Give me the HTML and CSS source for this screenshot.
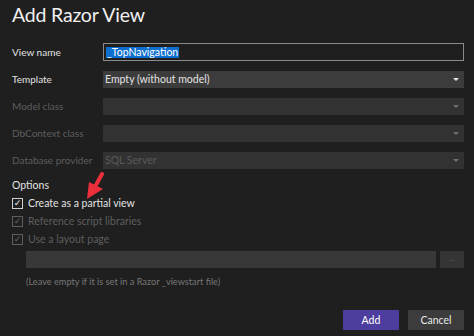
FILE: index.html
```html
<!DOCTYPE html>
<html lang="en">
<head>
  <meta charset="UTF-8">
  <title>Add Razor View</title>
  <link rel="stylesheet" href="styles.css">
</head>
<body>
  <div class="dialog">
    <h1 class="title">Add Razor View</h1>

    <div class="form">
      <label class="label">View name</label>
      <div class="textbox"><span class="selected">_TopNavigation</span></div>

      <label class="label">Template</label>
      <div class="combo">Empty (without model)<span class="caret"></span></div>

      <label class="label off">Model class</label>
      <div class="combo off"><span class="caret"></span></div>

      <label class="label off">DbContext class</label>
      <div class="combo off"><span class="caret"></span></div>

      <label class="label off">Database provider</label>
      <div class="combo off">SQL Server<span class="caret"></span></div>
    </div>

    <div class="options-title">Options</div>
    <div class="checks">
      <div class="check"><span class="box">✓</span>Create as a partial view</div>
      <div class="check off"><span class="box">✓</span>Reference script libraries</div>
      <div class="check off"><span class="box">✓</span>Use a layout page</div>
    </div>

    <div class="layout-row">
      <div class="layout-input"></div>
      <div class="browse">...</div>
    </div>
    <div class="hint">(Leave empty if it is set in a Razor _viewstart file)</div>

    <div class="buttons">
      <button class="btn primary">Add</button>
      <button class="btn">Cancel</button>
    </div>

    <!-- red annotation arrow -->
    <svg class="pointer" width="24" height="30" viewBox="0 0 24 30">
      <path d="M20 2 L14 13" stroke="#ec2f3b" stroke-width="4" stroke-linecap="round"/>
      <path d="M5 27 L7 10 L21 17 Z" fill="#ec2f3b"/>
    </svg>
  </div>
</body>
</html>
```
FILE: styles.css
```css
body {
  margin: 0;
  background: #1f1f1f;
  font-family: Lato, "Open Sans", sans-serif;
  color: #e2e2e2;
}

.dialog {
  position: relative;
  width: 474px;
  height: 336px;
  box-sizing: border-box;
  padding: 0 10px 0 12px;
}

.title {
  margin: 0;
  padding-top: 2px;
  height: 41px;
  font-size: 19.5px;
  font-weight: 400;
  line-height: 26px;
  letter-spacing: -0.2px;
  color: #f0f0f0;
}

.form {
  display: grid;
  grid-template-columns: 91px 1fr;
  grid-auto-rows: 18px;
  row-gap: 9px;
  align-items: center;
}

.label {
  font-size: 10px;
}

.off {
  color: #5e5e5e;
}

.textbox {
  height: 18px;
  box-sizing: border-box;
  border: 1px solid #8a8a8a;
  background: #1f1f1f;
  display: flex;
  align-items: center;
  padding-left: 2px;
}

.selected {
  background: #0f6fce;
  color: #fff;
  font-size: 10.5px;
  line-height: 11px;
  padding: 0 1px;
}

.combo {
  position: relative;
  height: 17px;
  background: #3c3c3c;
  font-size: 10.5px;
  line-height: 17px;
  padding-left: 2px;
  color: #e2e2e2;
}

.combo.off {
  background: #323232;
  color: #5a5a5a;
}

.caret {
  position: absolute;
  right: 5px;
  top: 7px;
  width: 0;
  height: 0;
  border-left: 3px solid transparent;
  border-right: 3px solid transparent;
  border-top: 3px solid #e6e6e6;
}

.combo.off .caret {
  border-top-color: #707070;
}

.options-title {
  margin-top: 9px;
  font-size: 10.5px;
  line-height: 14px;
}

.checks {
  margin-top: 2px;
}

.check {
  display: flex;
  align-items: center;
  gap: 5px;
  height: 18px;
  font-size: 10.5px;
}

.box {
  width: 11px;
  height: 11px;
  box-sizing: border-box;
  border: 1px solid #cfcfcf;
  font-size: 9px;
  line-height: 9px;
  text-align: center;
  color: #f2f2f2;
  font-family: "DejaVu Sans", sans-serif;
}

.check.off .box {
  border-color: #5e5e5e;
  color: #6a6a6a;
}

.layout-row {
  display: flex;
  gap: 4px;
  margin: 3px 0 0 14px;
  height: 17px;
}

.layout-input {
  flex: 1;
  background: #383838;
}

.browse {
  width: 24px;
  background: #353535;
  color: #5c5c5c;
  font-size: 8px;
  text-align: center;
  line-height: 14px;
}

.hint {
  margin: 8px 0 0 14px;
  font-size: 9.2px;
  color: #777;
}

.buttons {
  display: flex;
  justify-content: flex-end;
  gap: 9px;
  margin-top: 23px;
}

.btn {
  width: 56px;
  height: 20px;
  border: none;
  background: #3c3c3c;
  color: #e8e8e8;
  font-family: Lato, "Open Sans", sans-serif;
  font-size: 10.5px;
  padding: 0;
}

.btn.primary {
  background: #4c3d9e;
  color: #fff;
}

.pointer {
  position: absolute;
  left: 82px;
  top: 172px;
}
```
